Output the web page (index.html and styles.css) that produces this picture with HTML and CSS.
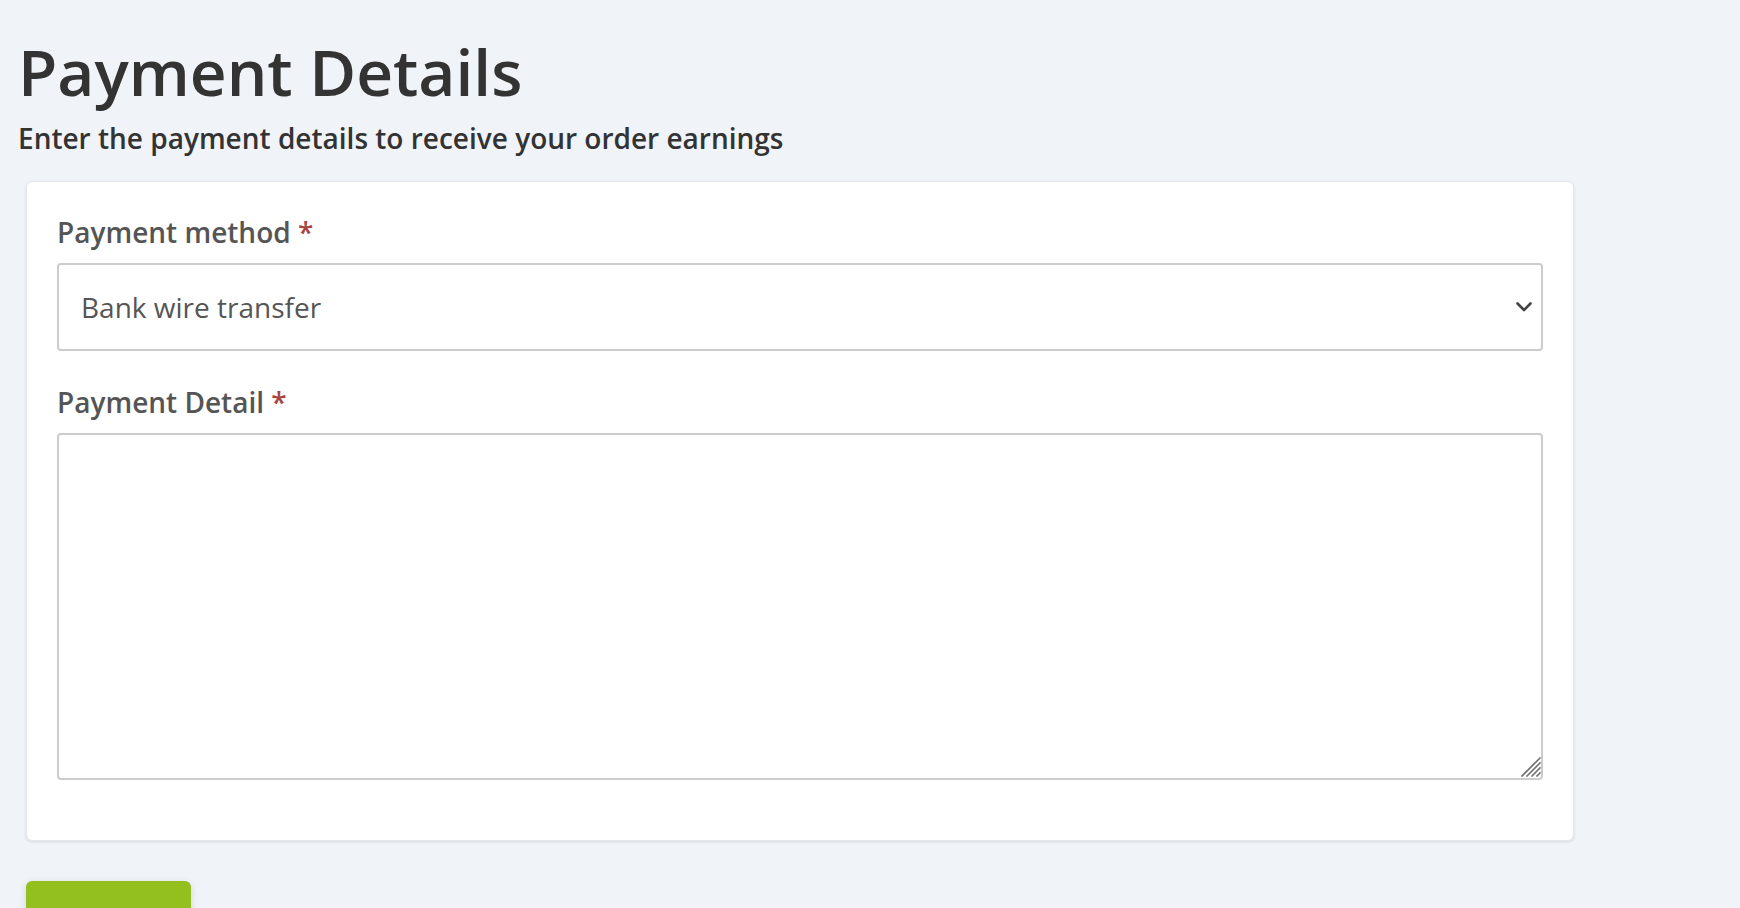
FILE: index.html
```html
<!DOCTYPE html>
<html lang="en">
<head>
<meta charset="utf-8">
<title>Payment Details</title>
<link rel="stylesheet" href="styles.css">
</head>
<body>
<main class="page">
  <h1 class="title">Payment Details</h1>
  <p class="subtitle">Enter the payment details to receive your order earnings</p>
  <form class="card">
    <div class="group">
      <label class="label" for="method">Payment method <span class="req">*</span></label>
      <div class="field">
        <select id="method" class="select">
          <option>Bank wire transfer</option>
          <option>PayPal</option>
        </select>
        <svg class="chevron" width="16" height="10" viewBox="0 0 16 10" aria-hidden="true">
          <path d="M1.5 1.5 L8 8 L14.5 1.5" fill="none" stroke="#444" stroke-width="2.6" stroke-linecap="round" stroke-linejoin="round"/>
        </svg>
      </div>
    </div>
    <div class="group">
      <label class="label" for="detail">Payment Detail <span class="req">*</span></label>
      <div class="field">
        <textarea id="detail" class="textarea"></textarea>
        <svg class="grip" width="20" height="20" viewBox="0 0 20 20" aria-hidden="true">
          <g stroke="#707070" stroke-width="1.6" stroke-linecap="square">
            <path d="M19 1 L1 19"/>
            <path d="M19 6 L6 19"/>
            <path d="M19 11 L11 19"/>
            <path d="M19 16 L16 19"/>
          </g>
        </svg>
      </div>
    </div>
  </form>
  <button class="btn" type="button" aria-label="Save"></button>
</main>
</body>
</html>
```
FILE: styles.css
```css
* { box-sizing: border-box; }
html, body { margin: 0; padding: 0; }
body {
  background: #f0f3f8;
  font-family: "Open Sans", "Noto Sans", sans-serif;
  color: #333;
  overflow: hidden;
}
.page {
  padding: 0 18px;
}
.title {
  margin: 34px 0 0;
  font-size: 64px;
  line-height: 1.2;
  font-weight: 600;
  color: #333;
}
.subtitle {
  margin: 6px 0 0;
  font-size: 28px;
  line-height: 1.5;
  font-weight: 600;
  color: #333;
}
.card {
  margin: 22px 0 0 8px;
  width: 1548px;
  background: #fff;
  border: 1px solid #e4e7ec;
  border-radius: 6px;
  box-shadow: 0 1px 3px rgba(0, 0, 0, 0.12);
  padding: 29px 30px 30px;
}
.group {
  margin-bottom: 30px;
}
.label {
  display: block;
  font-size: 28px;
  line-height: 1.5;
  font-weight: 600;
  color: #555;
  margin-bottom: 10px;
}
.req {
  color: #a94442;
}
.field {
  position: relative;
}
.select {
  display: block;
  width: 100%;
  height: 88px;
  appearance: none;
  -webkit-appearance: none;
  background: #fff;
  border: 2px solid #ccc;
  border-radius: 4px;
  padding: 0 50px 0 22px;
  font-family: "Open Sans", "Noto Sans", sans-serif;
  font-size: 28px;
  color: #555;
  outline: none;
}
.chevron {
  position: absolute;
  right: 11px;
  top: 39px;
  pointer-events: none;
}
.textarea {
  display: block;
  width: 100%;
  height: 347px;
  border: 2px solid #ccc;
  border-radius: 4px;
  padding: 16px 22px;
  font-family: "Open Sans", "Noto Sans", sans-serif;
  font-size: 28px;
  color: #555;
  resize: none;
  outline: none;
}
.grip {
  position: absolute;
  right: 2px;
  bottom: 3px;
  pointer-events: none;
}
.btn {
  display: block;
  margin: 40px 0 0 8px;
  width: 165px;
  height: 80px;
  padding: 0;
  background: #93c01f;
  border: none;
  border-radius: 6px;
  box-shadow: 0 2px 8px rgba(0, 0, 0, 0.12);
}
```
